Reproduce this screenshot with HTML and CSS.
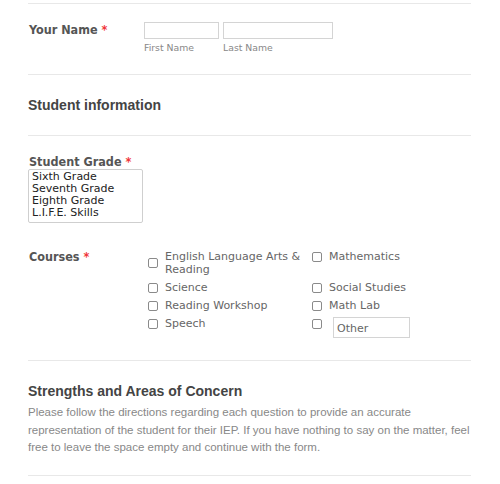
FILE: index.html
```html
<!DOCTYPE html>
<html>
<head>
<meta charset="utf-8">
<link rel="stylesheet" href="styles.css">
</head>
<body>
<div class="form">
  <div class="section name-section">
    <div class="label">Your Name <span class="req">*</span></div>
    <div class="name-fields">
      <div class="sub">
        <input class="text first" type="text">
        <span class="sublabel">First Name</span>
      </div>
      <div class="sub">
        <input class="text last" type="text">
        <span class="sublabel">Last Name</span>
      </div>
    </div>
  </div>
  <div class="section head-section">
    <h2 class="heading">Student information</h2>
  </div>
  <div class="section student-section">
    <div class="grade">
      <div class="label">Student Grade <span class="req">*</span></div>
      <div class="listbox">
        <div class="opt">Sixth Grade</div>
        <div class="opt">Seventh Grade</div>
        <div class="opt">Eighth Grade</div>
        <div class="opt">L.I.F.E. Skills</div>
      </div>
    </div>
    <div class="courses">
      <div class="label">Courses <span class="req">*</span></div>
      <div class="checks">
        <label class="check"><span class="box"></span><span class="ctext">English Language Arts &amp; Reading</span></label>
        <label class="check"><span class="box"></span><span class="ctext">Mathematics</span></label>
        <label class="check"><span class="box"></span><span class="ctext">Science</span></label>
        <label class="check"><span class="box"></span><span class="ctext">Social Studies</span></label>
        <label class="check"><span class="box"></span><span class="ctext">Reading Workshop</span></label>
        <label class="check"><span class="box"></span><span class="ctext">Math Lab</span></label>
        <label class="check"><span class="box"></span><span class="ctext">Speech</span></label>
        <label class="check other"><span class="box"></span><span class="other-input">Other</span></label>
      </div>
    </div>
  </div>
  <div class="section concern-section">
    <h2 class="heading">Strengths and Areas of Concern</h2>
    <p class="desc">Please follow the directions regarding each question to provide an accurate representation of the student for their IEP. If you have nothing to say on the matter, feel free to leave the space empty and continue with the form.</p>
  </div>
  <div class="section end"></div>
</div>
</body>
</html>
```

FILE: styles.css
```css
html, body {
  margin: 0;
  padding: 0;
  background: #fff;
}
.form {
  margin: 0 29px 0 28px;
  padding-top: 3px;
}
.section {
  border-top: 1px solid #e8e8e8;
}
.label {
  font-family: "DejaVu Sans Condensed", "DejaVu Sans", Verdana, sans-serif;
  font-weight: bold;
  font-size: 12.5px;
  color: #555;
  line-height: 14px;
  padding-left: 1px;
}
.req {
  color: #f0353a;
}
.name-section {
  display: flex;
  padding: 18px 0 25px;
  height: 27px;
}
.name-section .label {
  width: 115px;
  padding-top: 1px;
}
.name-fields {
  display: flex;
  gap: 4px;
}
.sub {
  display: flex;
  flex-direction: column;
}
.text {
  box-sizing: border-box;
  height: 20px;
  border: 1px solid #d4d4d4;
  margin: 0;
  padding: 0;
  background: #fff;
}
.first { width: 75px; }
.last { width: 110px; }
.sublabel {
  font-family: "DejaVu Sans", Verdana, sans-serif;
  font-size: 9.3px;
  color: #888;
  line-height: 12px;
  margin-top: 3px;
}
.head-section {
  height: 60px;
}
.heading {
  margin: 0;
  font-family: "Liberation Sans", Arial, sans-serif;
  font-weight: bold;
  font-size: 14px;
  color: #444;
  line-height: 18px;
}
.head-section .heading {
  padding-top: 21px;
}
.student-section {
  padding-top: 19px;
  height: 205px;
}
.listbox {
  box-sizing: border-box;
  width: 115px;
  height: 54px;
  border: 1px solid #cfcfcf;
  border-radius: 2px;
  padding: 1px 3px;
  font-family: "DejaVu Sans", Verdana, sans-serif;
  font-size: 11px;
  line-height: 12px;
  color: #222;
}
.courses {
  display: flex;
  margin-top: 27px;
}
.courses .label {
  width: 119px;
  flex: none;
}
.checks {
  display: grid;
  grid-template-columns: 164px 110px;
  row-gap: 5px;
  font-family: "DejaVu Sans", Verdana, sans-serif;
  font-size: 11px;
  line-height: 13px;
  color: #666;
}
.check {
  display: flex;
  align-items: flex-start;
}
.box {
  box-sizing: border-box;
  flex: none;
  width: 10px;
  height: 10px;
  border: 1px solid #8a8a8a;
  border-radius: 2px;
  margin: 2px 7px 0 0;
}
.check:first-child .box {
  margin-top: 8px;
}
.ctext {
  width: 140px;
}
.other-input {
  box-sizing: border-box;
  display: block;
  width: 77px;
  height: 21px;
  border: 1px solid #d4d4d4;
  margin: 0 0 0 4px;
  padding: 4px 3px 0;
  line-height: 13px;
}
.concern-section {
  padding-top: 21px;
  height: 93px;
}
.desc {
  margin: 4px 0 0;
  font-family: "Liberation Sans", Arial, sans-serif;
  font-size: 11.5px;
  line-height: 17.5px;
  color: #888;
}
```
